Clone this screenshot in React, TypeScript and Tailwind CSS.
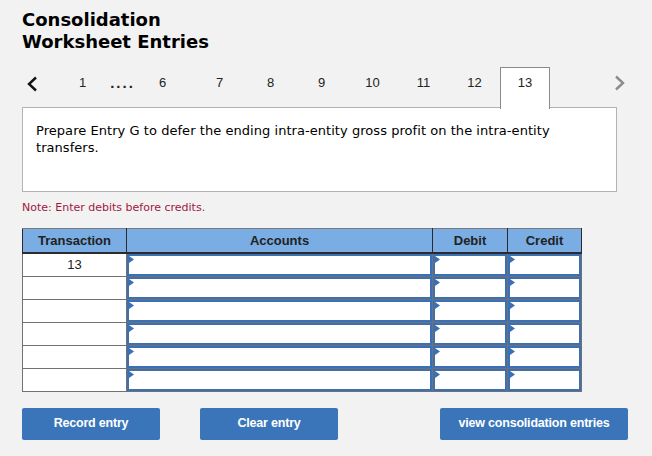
import React from "react";

const pages = [
  { label: "1", w: "w-[51px] ml-[17px]" },
  { label: "....", w: "w-[29px] font-bold text-[15px] tracking-[2px]" },
  { label: "6", w: "w-[51px]" },
  { label: "7", w: "w-[51px] ml-[6px]" },
  { label: "8", w: "w-[51px]" },
  { label: "9", w: "w-[51px]" },
  { label: "10", w: "w-[51px]" },
  { label: "11", w: "w-[51px]" },
  { label: "12", w: "w-[51px]" },
];

function InputCell() {
  return (
    <td className="border border-[#717171] p-0 h-[23px]">
      <div className="relative h-[22px] border-2 border-[#3b70b5] bg-white">
        <svg width="5" height="7" viewBox="0 0 5 7" className="absolute left-0 top-0">
          <path d="M0 0 L5 3.5 L0 7 Z" fill="#3b70b5" />
        </svg>
      </div>
    </td>
  );
}

export default function App() {
  const rows = ["13", "", "", "", "", ""];
  return (
    <div className="min-h-[456px] w-[652px] bg-[#f2f2f2] px-[22px] pt-[9px] text-[#222]">
      {/* ── Title ── */}
      <h1 className="font-['DejaVu_Sans',sans-serif] font-bold text-[18px] leading-[22px] text-black">
        Consolidation
        <br />
        Worksheet Entries
      </h1>

      {/* ── Pager ── */}
      <div className="mt-[14px] flex h-[41px] font-['Liberation_Sans',Arial,sans-serif] text-[13px] leading-[16px]">
        <div className="w-[18px] pt-[9px] pl-[4px]">
          <svg width="12" height="16" viewBox="0 0 12 16">
            <polyline points="10,1.5 3,8 10,14.5" fill="none" stroke="#111" strokeWidth="2.4" />
          </svg>
        </div>
        {pages.map(p => (
          <div key={p.label} className={`${p.w} pt-[8px] text-center`}>{p.label}</div>
        ))}
        <div className="relative z-10 w-[50px] h-[42px] border border-b-0 border-[#8a8a8a] bg-white pt-[7px] text-center">
          13
        </div>
        <div className="ml-[64px] pt-[8px]">
          <svg width="12" height="16" viewBox="0 0 12 16">
            <polyline points="2,1.5 9,8 2,14.5" fill="none" stroke="#8c8c8c" strokeWidth="2.4" />
          </svg>
        </div>
      </div>

      {/* ── Instruction ── */}
      <div className="-mt-px h-[85px] w-[595px] border border-[#b3b3b3] bg-white px-[13px] pt-[14px] font-['DejaVu_Sans',sans-serif] text-[13px] leading-[17px] tracking-[0.05px] text-black">
        Prepare Entry G to defer the ending intra-entity gross profit on the intra-entity transfers.
      </div>

      <p className="mt-[9px] font-['DejaVu_Sans',sans-serif] text-[11px] leading-[14px] text-[#a1183f]">
        Note: Enter debits before credits.
      </p>

      {/* ── Entry table ── */}
      <table className="mt-[13px] w-[559px] table-fixed border-collapse font-['Liberation_Sans',Arial,sans-serif]">
        <colgroup>
          <col className="w-[104px]" />
          <col className="w-[306px]" />
          <col className="w-[75px]" />
          <col className="w-[74px]" />
        </colgroup>
        <thead>
          <tr className="bg-[#79ade3] text-[13px] font-bold text-[#222]">
            {["Transaction", "Accounts", "Debit", "Credit"].map(h => (
              <th
                key={h}
                className="h-[24px] border border-[#2b2b2b] border-t-[#7a7a7a] border-b-2 p-0 pt-px text-center font-bold"
              >
                {h}
              </th>
            ))}
          </tr>
        </thead>
        <tbody>
          {rows.map((t, i) => (
            <tr key={i}>
              <td className="h-[23px] border border-[#717171] bg-white p-0 text-center text-[13px]">{t}</td>
              <InputCell />
              <InputCell />
              <InputCell />
            </tr>
          ))}
        </tbody>
      </table>

      {/* ── Actions ── */}
      <div className="mt-[16px] flex font-['Liberation_Sans',Arial,sans-serif] text-[12.5px] font-bold text-white">
        <button type="button" className="h-[32px] w-[138px] rounded-[2px] bg-[#3a75b9] tracking-[-0.2px]">
          Record entry
        </button>
        <button type="button" className="ml-[40px] h-[32px] w-[138px] rounded-[2px] bg-[#3a75b9] tracking-[-0.2px]">
          Clear entry
        </button>
        <button type="button" className="ml-[102px] h-[32px] w-[188px] rounded-[2px] bg-[#3a75b9] tracking-[-0.2px]">
          view consolidation entries
        </button>
      </div>
    </div>
  );
}
